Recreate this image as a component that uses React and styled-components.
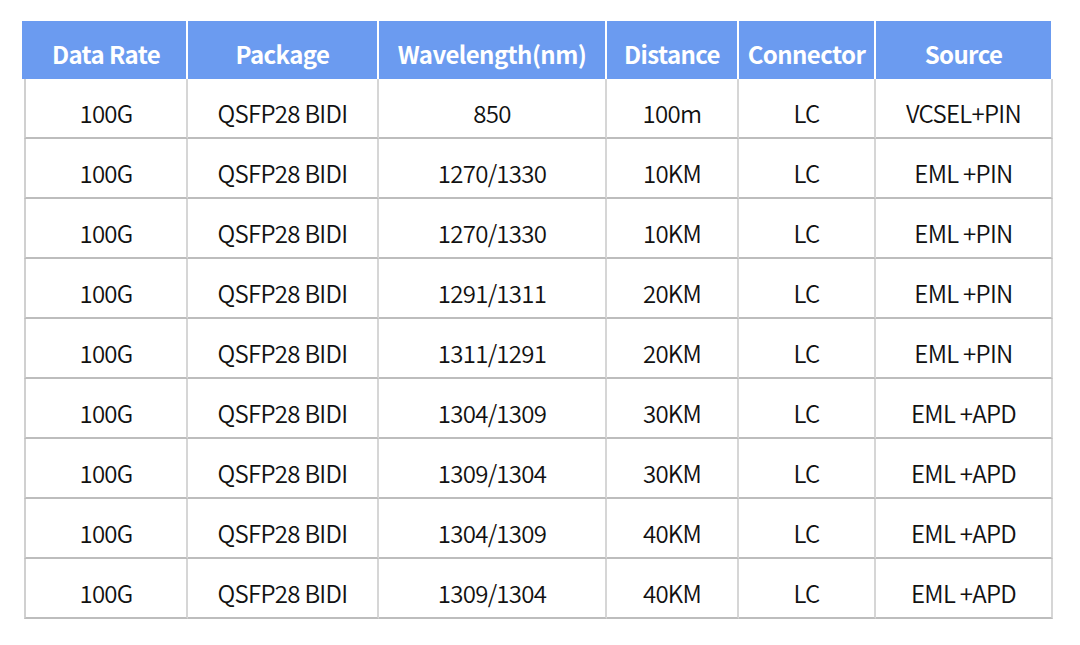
import React from "react";
import styled, { createGlobalStyle } from "styled-components";

const GlobalStyle = createGlobalStyle`
    html, body {
        margin: 0;
        padding: 0;
        background: #ffffff;
    }
    body {
        font-family: "Noto Sans CJK SC", "Noto Sans", sans-serif;
    }
`;

const Page = styled.div`
    padding: 21px 0 0 22px;
`;

const Grid = styled.div`
    display: grid;
    grid-template-columns: 166px 191px 228px 132px 137px 177px;
    width: 1031px;
`;

const HeadCell = styled.div`
    height: 58px;
    display: flex;
    align-items: center;
    justify-content: center;
    padding-top: 6px;
    padding-left: ${(p) => (p.$first ? "4px" : "0")};
    box-sizing: border-box;
    background-color: #6b9bf0;
    color: #ffffff;
    font-size: 24px;
    font-weight: 700;
    letter-spacing: -0.6px;
    white-space: nowrap;
    border-right: 2px solid #ffffff;
    &:last-child {
        border-right: none;
    }
`;

const Cell = styled.div`
    height: 60px;
    display: flex;
    align-items: center;
    justify-content: center;
    padding-top: 8px;
    box-sizing: border-box;
    color: #111111;
    font-size: 24px;
    font-weight: 350;
    letter-spacing: -0.7px;
    white-space: nowrap;
    border-bottom: 2px solid #bdbdbd;
    border-right: 2px solid #d6d6d6;
    margin-left: ${(p) => (p.$first ? "2px" : "0")};
    border-left: ${(p) => (p.$first ? "2px solid #d0d0d0" : "none")};
`;

const headers = ["Data Rate", "Package", "Wavelength(nm)", "Distance", "Connector", "Source"];

const rows = [
    ["100G", "QSFP28 BIDI", "850", "100m", "LC", "VCSEL+PIN"],
    ["100G", "QSFP28 BIDI", "1270/1330", "10KM", "LC", "EML +PIN"],
    ["100G", "QSFP28 BIDI", "1270/1330", "10KM", "LC", "EML +PIN"],
    ["100G", "QSFP28 BIDI", "1291/1311", "20KM", "LC", "EML +PIN"],
    ["100G", "QSFP28 BIDI", "1311/1291", "20KM", "LC", "EML +PIN"],
    ["100G", "QSFP28 BIDI", "1304/1309", "30KM", "LC", "EML +APD"],
    ["100G", "QSFP28 BIDI", "1309/1304", "30KM", "LC", "EML +APD"],
    ["100G", "QSFP28 BIDI", "1304/1309", "40KM", "LC", "EML +APD"],
    ["100G", "QSFP28 BIDI", "1309/1304", "40KM", "LC", "EML +APD"],
];

export default function App() {
    return (
        <Page>
            <GlobalStyle />
            <Grid>
                {headers.map((h, j) => (
                    <HeadCell key={h} $first={j === 0}>
                        {h}
                    </HeadCell>
                ))}
                {rows.map((row, i) =>
                    row.map((value, j) => (
                        <Cell key={i + "-" + j} $first={j === 0}>
                            {value}
                        </Cell>
                    ))
                )}
            </Grid>
        </Page>
    );
}
